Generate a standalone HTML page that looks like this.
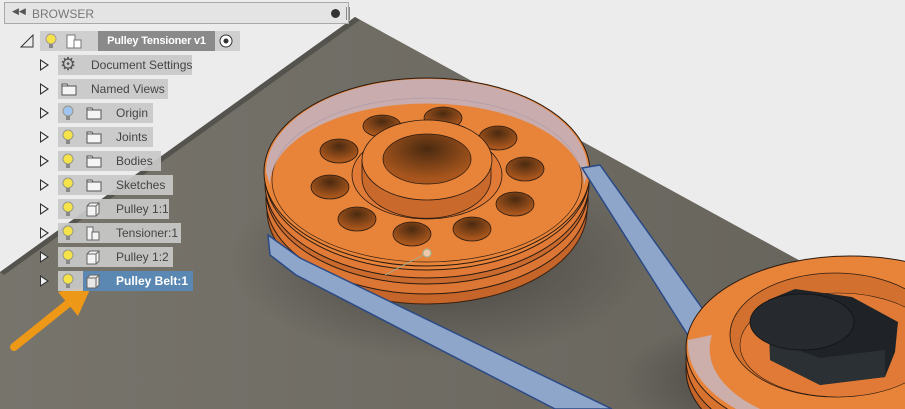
<!DOCTYPE html>
<html><head><meta charset="utf-8"><style>
html,body{margin:0;padding:0;width:905px;height:409px;overflow:hidden;background:#ececec;font-family:"Liberation Sans",sans-serif}
#scene{position:absolute;left:0;top:0}
.hdr{position:absolute;left:4px;top:2px;width:345px;height:22px;background:#e4e4e4;border:1px solid #a9a9a9;box-sizing:border-box;font-size:12px;color:#777}
.row{position:absolute;height:20px;font-size:12px;color:#444;line-height:20px}
.box{position:absolute;top:0;height:20px;background:rgba(200,200,200,.93)}
.tri{position:absolute;width:0;height:0;border-top:6px solid transparent;border-bottom:6px solid transparent;border-left:9px solid #333}
.tri:after{content:"";position:absolute;left:-8px;top:-4px;border-top:4px solid transparent;border-bottom:4px solid transparent;border-left:6px solid #eee}
</style></head><body>
<svg id="scene" width="905" height="409" viewBox="0 0 905 409">
<defs>
<radialGradient id="sh" cx="0.5" cy="0.5" r="0.5"><stop offset="0" stop-color="#3d3b37" stop-opacity=".8"/><stop offset="1" stop-color="#3d3b37" stop-opacity="0"/></radialGradient>
<radialGradient id="hole" cx="0.5" cy="0.3" r="0.6"><stop offset="0" stop-color="#4a2a10"/><stop offset="1" stop-color="#a8561d"/></radialGradient>
<linearGradient id="plat" x1="0" y1="0" x2="1" y2="0"><stop offset="0" stop-color="#77746c"/><stop offset="1" stop-color="#66635b"/></linearGradient>
</defs>
<polygon points="0,272 355,17 795,258 905,318 905,409 0,409" fill="url(#plat)"/>
<polygon points="0,272 355,17 360,20 4,275" fill="#55534e"/>
<ellipse cx="440" cy="260" rx="210" ry="100" fill="url(#sh)"/>
<ellipse cx="760" cy="380" rx="140" ry="60" fill="url(#sh)"/>
<!-- pulley 1 -->
<ellipse cx="427" cy="210" rx="160" ry="94" fill="#c5652a" stroke="#3a2010"/>
<ellipse cx="427" cy="200" rx="161" ry="94" fill="#dc7634" stroke="#2a1a10"/>
<ellipse cx="427" cy="190" rx="161" ry="94" fill="#c96a2e" stroke="#2a1a10"/>
<ellipse cx="427" cy="184" rx="162" ry="94" fill="#e07a36" stroke="#2a1a10"/>
<ellipse cx="427" cy="176" rx="162" ry="94" fill="#e8843a" stroke="#2a1a10"/>
<ellipse cx="427" cy="172" rx="163" ry="94" fill="#e8843a" stroke="#2a1a10"/>
<ellipse cx="427" cy="180" rx="155" ry="82" fill="#e8843a" stroke="#3a2010" stroke-width=".7"/>
<path d="M266,172 A161,93 0 0 1 588,172 L584,185 A154,80 0 0 0 270,185 Z" fill="#c3b3c2" opacity=".85"/>
<g fill="url(#hole)" stroke="#2a1a10" stroke-width=".8">
<ellipse cx="339" cy="151" rx="19" ry="12"/><ellipse cx="330" cy="187" rx="19" ry="12"/>
<ellipse cx="357" cy="219" rx="19" ry="12"/><ellipse cx="412" cy="234" rx="19" ry="12"/>
<ellipse cx="472" cy="229" rx="19" ry="12"/><ellipse cx="515" cy="204" rx="19" ry="12"/>
<ellipse cx="525" cy="169" rx="19" ry="12"/><ellipse cx="498" cy="138" rx="19" ry="12"/>
<ellipse cx="443" cy="118" rx="19" ry="11"/><ellipse cx="382" cy="126" rx="19" ry="11"/>
</g>
<ellipse cx="427" cy="175" rx="75" ry="44" fill="#e07a36" stroke="#2a1a10" stroke-width=".8"/>
<path d="M362,160 L362,178 A64,40 0 0 0 491,178 L491,160 Z" fill="#c9692c" stroke="#2a1a10" stroke-width=".8"/>
<ellipse cx="427" cy="160" rx="65" ry="40" fill="#e8843a" stroke="#2a1a10" stroke-width=".8"/>
<ellipse cx="427" cy="159" rx="44" ry="25" fill="url(#hole)" stroke="#2a1a10" stroke-width=".8"/>
<line x1="427" y1="253" x2="385" y2="275" stroke="#9ab29a" stroke-width=".8"/>
<circle cx="427" cy="253" r="4" fill="#f0c8a8" stroke="#9ab29a"/>
<polygon points="268,235 300,258 612,409 555,409 296,275 270,255" fill="#8ea6c9" stroke="#2b4a85" stroke-width="1.5"/>
<polygon points="582,168 600,165 712,322 696,348" fill="#8ea6c9" stroke="#2b4a85" stroke-width="1.5"/>
<!-- pulley 2 -->
<ellipse cx="850" cy="370" rx="164" ry="92" fill="#c5652a" stroke="#2a1a10"/>
<ellipse cx="850" cy="360" rx="164" ry="92" fill="#d8722f" stroke="#2a1a10"/>
<ellipse cx="850" cy="348" rx="164" ry="92" fill="#e8843a" stroke="#2a1a10"/>
<path d="M688,340 A164,92 0 0 0 760,420 L790,420 A150,80 0 0 1 712,335 Z" fill="#c9b3b8" opacity=".9"/>
<ellipse cx="835" cy="335" rx="105" ry="62" fill="#d2712f" stroke="#2a1a10" stroke-width=".8"/>
<ellipse cx="838" cy="345" rx="98" ry="52" fill="#e07a36" stroke="#2a1a10" stroke-width=".6"/>
<polygon points="768,300 795,289 852,297 898,322 895,352 885,377 820,385 770,360" fill="#1f2327"/>
<polygon points="770,340 820,358 885,350 885,377 820,385 770,360" fill="#2b3035"/>
<ellipse cx="802" cy="322" rx="52" ry="28" fill="#262a2e" stroke="#111" stroke-width=".8"/>
<line x1="14" y1="347" x2="70" y2="302" stroke="#ee9818" stroke-width="8" stroke-linecap="round"/>
<polygon points="92,285 58,292 78,316" fill="#ee9818"/>
</svg>

<div class="hdr"><span style="position:absolute;left:7px;top:3px;font-size:9px;color:#555">◀◀</span><span style="position:absolute;left:27px;top:4px">BROWSER</span>
<span style="position:absolute;left:326px;top:6px;width:9px;height:9px;border-radius:50%;background:#333"></span>
<span style="position:absolute;left:341px;top:4px;width:2px;height:13px;border-left:1px solid #888;border-right:1px solid #888"></span></div>

<div class="row" style="left:20px;top:31px;width:220px">
<svg style="position:absolute;left:0;top:3px" width="14" height="14"><polygon points="1,13 13,1 13,13" fill="none" stroke="#333"/></svg>
<div class="box" style="left:20px;width:200px;background:rgba(205,205,205,.95)"></div>
<div class="box" style="left:78px;width:117px;background:#8a8a8a"></div>
<span style="position:absolute;left:80px;width:113px;text-align:center;color:#fff;font-weight:bold;font-size:11px;letter-spacing:-0.2px;white-space:nowrap">Pulley Tensioner v1</span>
<svg style="position:absolute;left:25px;top:2px" width="12" height="16"><circle cx="6" cy="6" r="5" fill="#f5e34a" stroke="#a99"/><rect x="4" y="11" width="4" height="4" fill="#888"/></svg>
<svg style="position:absolute;left:46px;top:2px" width="16" height="16"><rect x="1" y="2" width="8" height="13" fill="#fff" stroke="#777"/><rect x="8" y="7" width="7" height="8" fill="#fff" stroke="#777"/></svg>
<svg style="position:absolute;left:199px;top:3px" width="14" height="14"><circle cx="7" cy="7" r="6" fill="#fff" stroke="#333"/><circle cx="7" cy="7" r="2.5" fill="#333"/></svg>
</div>

<div id="rows"></div>
<script>
var rows=[["Document Settings",134,"gear"],["Named Views",110,"folder0"],["Origin",95,"folder","#9fc4ef"],["Joints",95,"folder"],["Bodies",103,"folder"],["Sketches",115,"folder"],["Pulley 1:1",111,"cube"],["Tensioner:1",123,"tens"],["Pulley 1:2",115,"cube"],["Pulley Belt:1",135,"cube","",1]];
var h="";
rows.forEach(function(r,i){var y=55+i*24;
var bulb='<svg style="position:absolute;left:4px;top:2px" width="12" height="16"><circle cx="6" cy="6" r="5" fill="'+(r[3]||"#f5e34a")+'" stroke="#998"/><rect x="4" y="11" width="4" height="4" fill="#888"/></svg>';
var folder=function(x){return '<svg style="position:absolute;left:'+x+'px;top:3px" width="16" height="14"><path d="M1,2 H6 L7,4 H15 V13 H1 Z" fill="#f4f4f4" stroke="#555"/><line x1="1" y1="4" x2="15" y2="4" stroke="#555"/></svg>'};
var cube=function(x,c){return '<svg style="position:absolute;left:'+x+'px;top:2px" width="16" height="16"><path d="M2,5 L5,2 H14 V12 L11,15 H2 Z" fill="'+c+'" stroke="#666"/><path d="M2,5 H11 V15 M11,5 L14,2" fill="none" stroke="#666"/></svg>'};
var inner="",tx=58;
if(r[2]=="gear"){inner='<span style="position:absolute;left:2px;top:-1px;font-size:18px;color:#555">⚙</span>';tx=33}
else if(r[2]=="folder0"){inner=folder(3);tx=33}
else{inner=bulb;tx=58;
 if(r[2]=="folder")inner+=folder(28);
 else if(r[2]=="cube")inner+=cube(27,r[4]?"#e8e8e8":"#f4f4f4");
 else inner+='<svg style="position:absolute;left:27px;top:2px" width="16" height="16"><rect x="2" y="2" width="6" height="13" fill="#f4f4f4" stroke="#666"/><rect x="7" y="7" width="7" height="8" fill="#f4f4f4" stroke="#666"/></svg>';}
var box='<div class="box" style="left:0;width:'+r[1]+'px"></div>';
if(r[4])box='<div class="box" style="left:0;width:25px"></div><div class="box" style="left:25px;width:'+(r[1]-25)+'px;background:#5b88b2"></div>';
h+='<div class="row" style="left:38px;top:'+y+'px;width:200px"><div class="tri" style="left:2px;top:4px"></div><div style="position:absolute;left:20px;top:0;width:160px;height:20px">'+box+inner+'<span style="position:absolute;white-space:nowrap;left:'+tx+'px;'+(r[4]?'color:#fff;font-weight:bold':'')+'">'+r[0]+'</span></div></div>';});
document.getElementById("rows").innerHTML=h;
</script>
</body></html>
